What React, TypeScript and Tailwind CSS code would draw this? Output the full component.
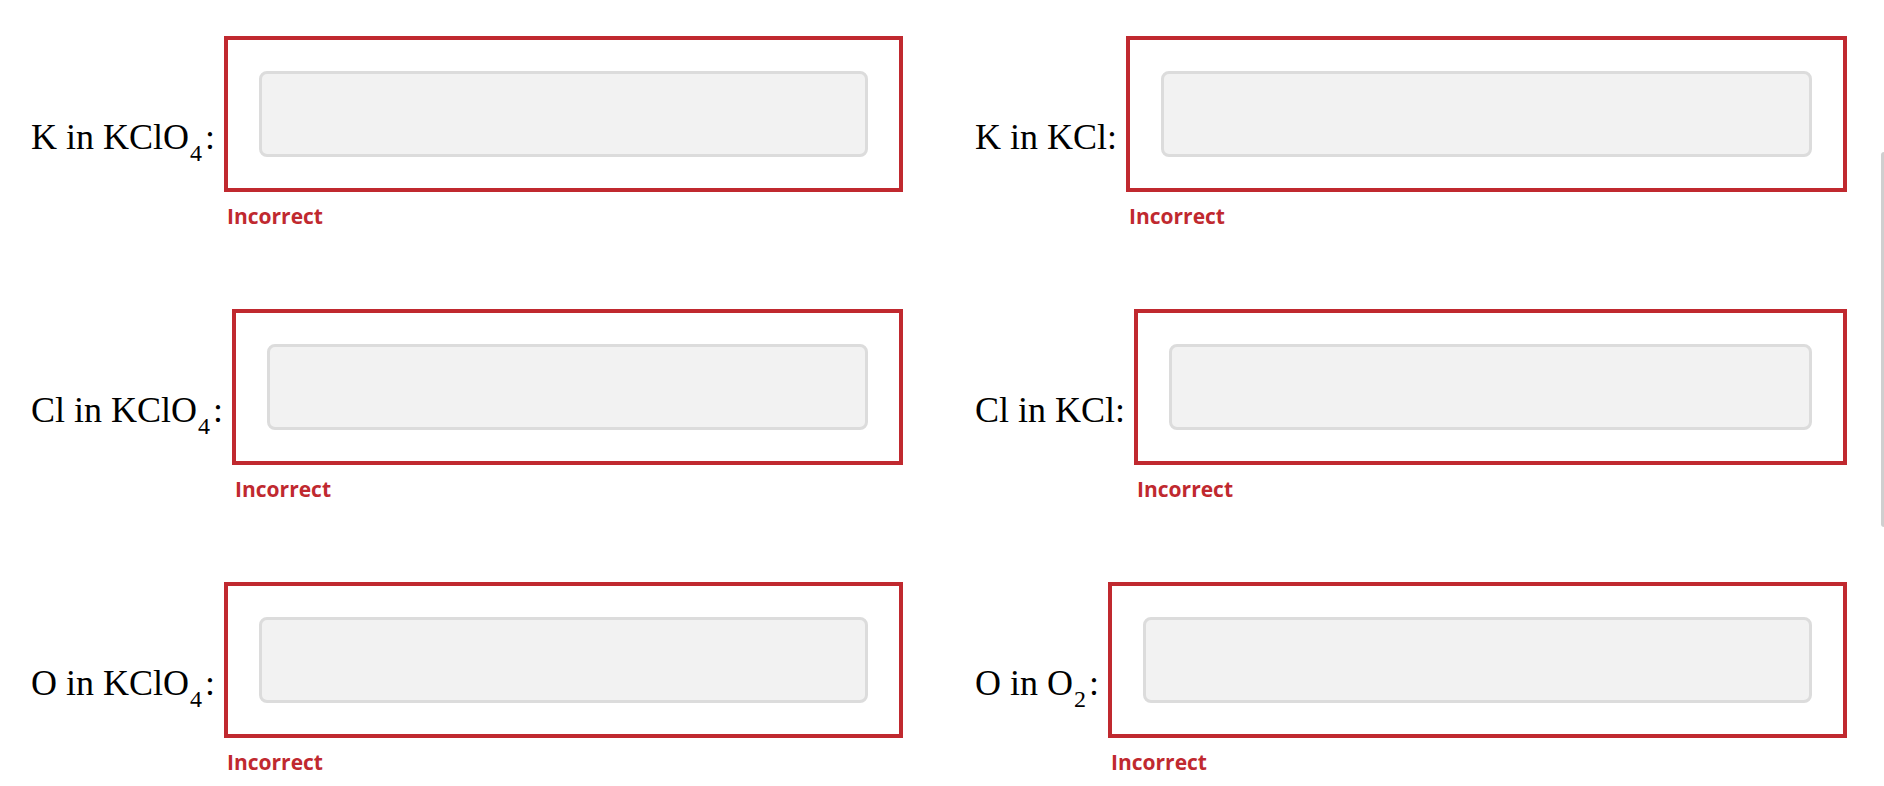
import React from "react";

type Item = { pre: string; sub?: string };

const items: Item[] = [
  { pre: "K in KClO", sub: "4" },
  { pre: "K in KCl" },
  { pre: "Cl in KClO", sub: "4" },
  { pre: "Cl in KCl" },
  { pre: "O in KClO", sub: "4" },
  { pre: "O in O", sub: "2" },
];

function Cell({ item }: { item: Item }) {
  return (
    <div className="flex items-start">
      <div
        className="pt-[83px] mr-[9px] text-[36px] leading-none text-black whitespace-nowrap"
        style={{ fontFamily: '"Liberation Serif", "Times New Roman", serif' }}
      >
        {item.pre}
        {item.sub && (
          <span className="relative top-[12px] text-[24px] ml-[1px] mr-[3px]">{item.sub}</span>
        )}
        :
      </div>
      <div className="flex-1 flex flex-col">
        <div className="border-[4px] border-[#c0292f] p-[31px] bg-white">
          <input
            type="text"
            aria-label={item.pre + (item.sub ?? "")}
            className="block w-full h-[86px] border-[3px] border-[#dcdcdc] rounded-[8px] bg-[#f2f2f2] outline-none"
          />
        </div>
        <div
          className="mt-[10px] ml-[3px] text-[21px] leading-[28px] font-bold text-[#c0292f]"
          style={{ fontFamily: '"Open Sans", "Noto Sans", sans-serif' }}
        >
          Incorrect
        </div>
      </div>
    </div>
  );
}

export default function App() {
  return (
    <div className="relative w-[1884px] h-[786px] bg-white overflow-hidden">
      <div className="grid grid-cols-2 gap-x-[72px] gap-y-[79px] pt-[36px] pl-[31px] pr-[37px]">
        {items.map((it, i) => (
          <Cell key={i} item={it} />
        ))}
      </div>
      <div className="absolute right-0 top-[152px] h-[375px] w-[3px] rounded-l-full bg-[#cfcfcf]" />
    </div>
  );
}
